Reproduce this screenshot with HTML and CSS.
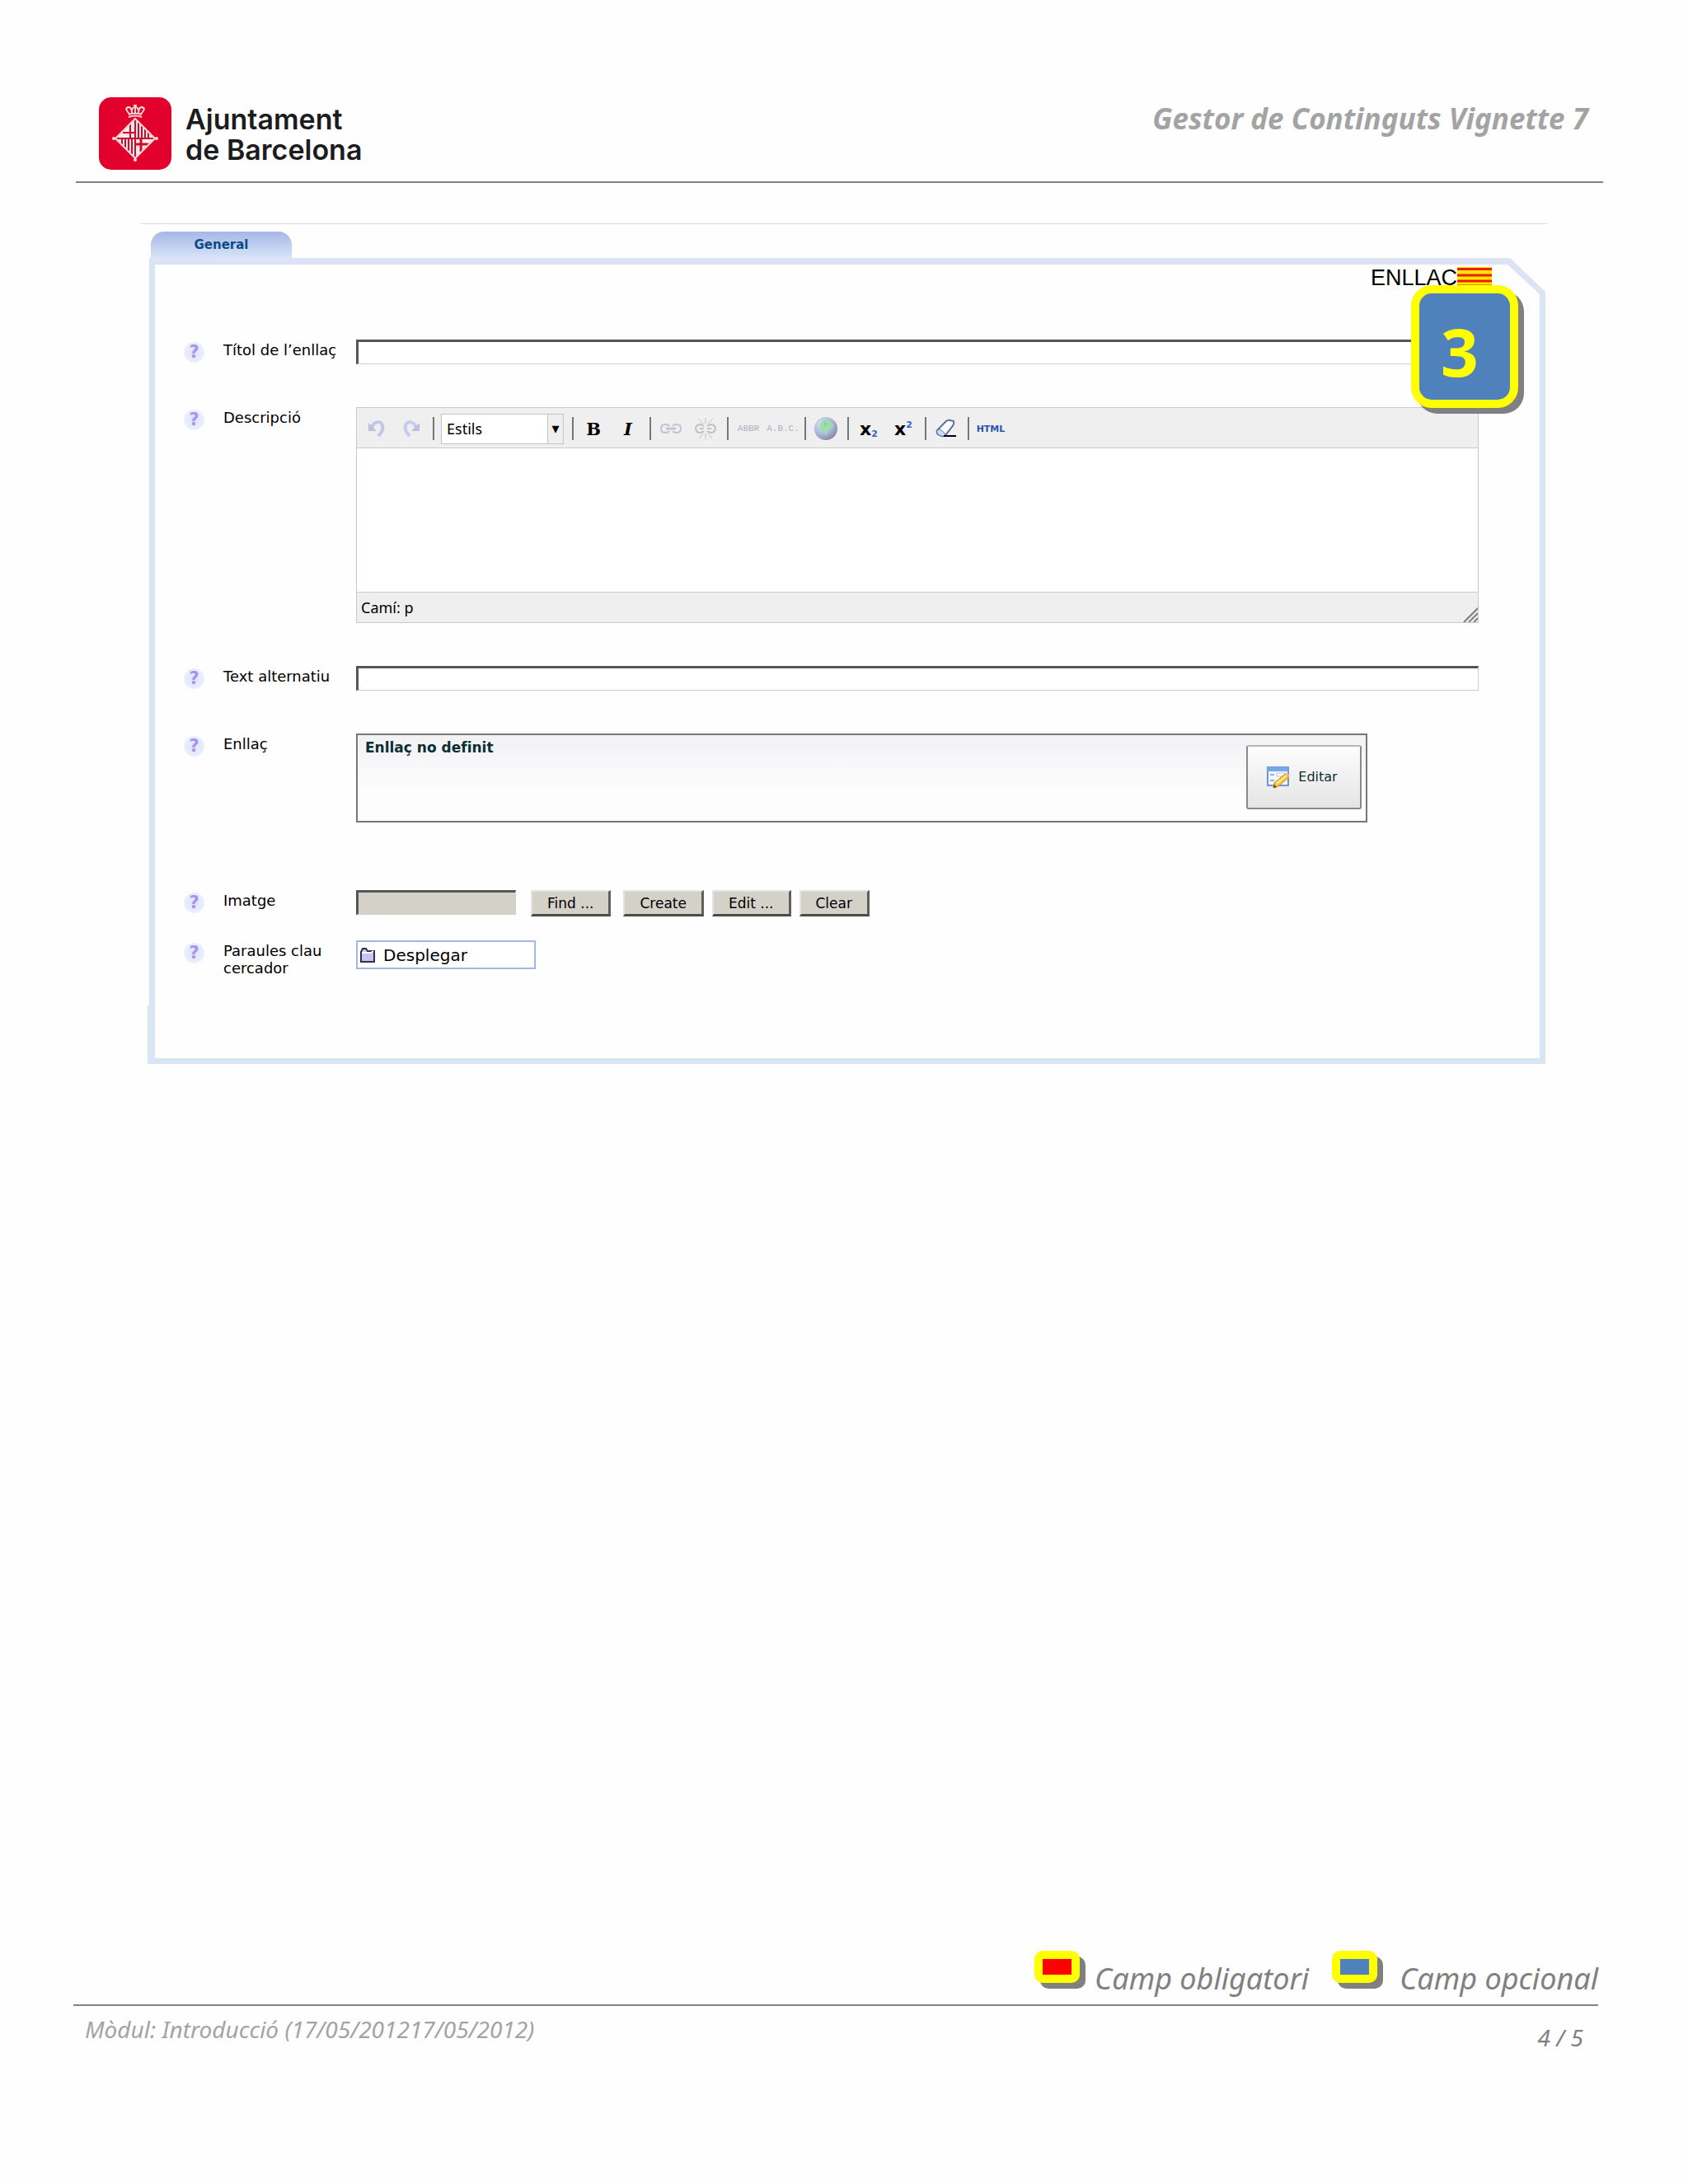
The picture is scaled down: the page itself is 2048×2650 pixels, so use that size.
FILE: index.html
```html
<!DOCTYPE html>
<html lang="ca">
  <head>
    <meta charset="utf-8" />
    <title>Gestor de Continguts Vignette 7</title>
    <link rel="stylesheet" href="styles.css">
  </head>

  <body>
    <header class="page-header">
      <div class="brand">
        <svg class="brand-logo" viewBox="0 0 88 88" aria-hidden="true">
          <rect width="88" height="88" rx="15" fill="#e2002d"></rect>
          <!-- crown -->
          <g fill="none" stroke="#fbd9d6" stroke-width="2">
            <path d="M37 20 Q30 13 36 12 Q40 12 40 20 M51 20 Q58 13 52 12 Q48 12 48 20 M40 20 Q39 12 44 12 Q49 12 48 20"></path>
            <path d="M36 24 Q44 21 52 24 M36 21 Q44 18 52 21 M44 9 V20 M42 10 H46"></path>
          </g>
          <!-- shield -->
          <path d="M44 27 L67 50 L44 73 L21 50 Z" fill="#fdeae6"></path>
          <g stroke="#cf0a30" stroke-width="2" fill="none">
            <path d="M38 33 V50 M29 43 H44 M44 27 V73 M21 50 H67"></path>
            <path d="M48 31 V50 M52 35 V50 M56 39 V50 M60 43 V50"></path>
            <path d="M28 50 V57 M32 50 V61 M36 50 V65 M40 50 V69"></path>
            <path d="M51 50 V66 M44 57 H60" stroke-width="3"></path>
          </g>
          <path d="M44 26 L68 50 L44 74 L20 50 Z" fill="none" stroke="#fbd9d6" stroke-width="2"></path>
          <g fill="#fbd9d6">
            <circle cx="18" cy="50" r="2"></circle>
            <circle cx="70" cy="50" r="2"></circle>
            <circle cx="44" cy="76" r="2"></circle>
          </g>
        </svg>
        <div class="brand-name">Ajuntament<br>de Barcelona</div>
      </div>
      <h1 class="doc-title">Gestor de Continguts Vignette 7</h1>
    </header>

    <main class="content">
      <button class="tab" type="button">General</button>
      <section class="panel">
        <svg class="panel-corner" viewBox="0 0 46 44" aria-hidden="true">
          <rect width="46" height="44" fill="#fefefe"></rect>
          <path d="M0 0 H3 L46 41 V44 H38 V43 L0 8 Z" fill="#dde2f5"></path>
        </svg>
        <div class="number-badge">3</div>

        <div class="panel-title">
          <span>ENLLAC</span>
          <svg class="flag" viewBox="0 0 42 24" aria-label="Català">
            <rect width="42" height="24" fill="#ffe800"></rect>
            <path d="M0 2.5 H42 M0 10 H42 M0 17 H42 M0 23 H42" stroke="#ee1c00" stroke-width="3"></path>
          </svg>
        </div>

        <form class="form">
          <div class="row">
            <button class="help" type="button">?</button>
            <label class="label" for="titol">Títol de l’enllaç</label>
            <input class="text-input" id="titol" type="text">
          </div>

          <div class="row">
            <button class="help" type="button">?</button>
            <label class="label" for="descripcio">Descripció</label>
            <div class="editor">
              <div class="toolbar">
                <button class="tool" type="button" aria-label="Desfer">
                  <svg width="22" height="22" viewBox="0 0 22 22"><path d="M5 9 L8 5 Q13 1 17 5 Q21 12 13 20" fill="none" stroke="#c3c6e4" stroke-width="4"></path><path d="M1 4 V14 H11 Z" fill="#b9c2dd"></path></svg>
                </button>
                <button class="tool" type="button" aria-label="Refer">
                  <svg width="22" height="22" viewBox="0 0 22 22"><path d="M17 9 L14 5 Q9 1 5 5 Q1 12 9 20" fill="none" stroke="#c9c8ee" stroke-width="4"></path><path d="M21 4 V14 H11 Z" fill="#b9c2e2"></path></svg>
                </button>
                <span class="sep"></span>
                <div class="style-select">
                  <select aria-label="Estils"><option>Estils</option></select>
                </div>
                <span class="sep"></span>
                <button class="tool bold" type="button">B</button>
                <button class="tool bold italic" type="button">I</button>
                <span class="sep"></span>
                <button class="tool" type="button" aria-label="Inserir enllaç">
                  <svg width="26" height="14" viewBox="0 0 26 14"><g fill="none" stroke="#c0c5cf" stroke-width="2"><path d="M11 4 Q10 2 6 2 Q1 2 1 7 Q1 12 6 12 Q10 12 11 10 M15 4 Q16 2 20 2 Q25 2 25 7 Q25 12 20 12 Q16 12 15 10"></path><path d="M7 7 H19" stroke-width="3"></path></g></svg>
                </button>
                <button class="tool" type="button" aria-label="Treure enllaç">
                  <svg width="26" height="28" viewBox="0 0 26 28"><g fill="none" stroke="#bfc1c4" stroke-width="2"><path d="M11 11 Q9 9 6 9 Q1 10 1 14 Q2 19 6 19 Q9 19 11 17 M15 11 Q17 9 20 9 Q25 10 25 14 Q24 19 20 19 Q17 19 15 17 M6 14 H11 M15 14 H20"></path><path d="M13 1 V8 M4 2 L10 8 M22 2 L16 8 M13 20 V27 M5 26 L10 20 M21 26 L16 20" stroke-width="1"></path></g></svg>
                </button>
                <span class="sep"></span>
                <button class="tool tiny" type="button">ABBR</button>
                <button class="tool tiny" type="button">A.B.C.</button>
                <span class="sep"></span>
                <button class="tool" type="button" aria-label="Idioma">
                  <svg width="28" height="28" viewBox="0 0 28 28">
                    <defs><radialGradient id="globe" cx="35%" cy="30%" r="75%"><stop offset="0" stop-color="#d6e6f2"></stop><stop offset="0.6" stop-color="#a9b6dc"></stop><stop offset="1" stop-color="#85899f"></stop></radialGradient></defs>
                    <circle cx="14" cy="14" r="14" fill="url(#globe)"></circle>
                    <path d="M9 4 L17 2 L20 8 L24 11 L18 15 L14 22 L11 17 L6 13 L8 8 Z" fill="#9cdfa4"></path>
                    <path d="M12 6 L16 8 L12 11 Z" fill="#8bbde6"></path>
                  </svg>
                </button>
                <span class="sep"></span>
                <button class="tool script" type="button">x<sub>2</sub></button>
                <button class="tool script" type="button">x<sup>2</sup></button>
                <span class="sep"></span>
                <button class="tool" type="button" aria-label="Netejar">
                  <svg width="26" height="24" viewBox="0 0 26 24"><path d="M13 3 Q15 1 18 2 L22 3 Q23 7 20 10 L12 20 Q9 23 3 19 Q0 16 3 13 Z" fill="#fff" stroke="#5d6fa6" stroke-width="2"></path><path d="M3 13 Q9 13 12 20 Q9 23 3 19 Q0 16 3 13Z" fill="#cfdcf5" stroke="#5d6fa6"></path><path d="M10 21 H25" stroke="#000" stroke-width="2"></path></svg>
                </button>
                <span class="sep"></span>
                <button class="tool html" type="button">HTML</button>
              </div>
              <textarea class="editor-text" id="descripcio"></textarea>
              <div class="status">
                <span>Camí: p</span>
                <svg class="grip" viewBox="0 0 18 18" aria-hidden="true"><path d="M1 18 L18 1 M7 18 L18 7 M13 18 L18 13" stroke="#7d7d7d" stroke-width="2"></path></svg>
              </div>
            </div>
          </div>

          <div class="row">
            <button class="help" type="button">?</button>
            <label class="label" for="alternatiu">Text alternatiu</label>
            <input class="text-input" id="alternatiu" type="text">
          </div>

          <div class="row row-link">
            <button class="help" type="button">?</button>
            <span class="label">Enllaç</span>
            <div class="link-box">
              <strong>Enllaç no definit</strong>
              <button class="edit-button" type="button">
                <svg width="28" height="28" viewBox="0 0 28 28" aria-hidden="true">
                  <rect x="1" y="2" width="25" height="22" fill="#f4f9ff" stroke="#6e96d6" stroke-width="2"></rect>
                  <rect x="1" y="2" width="25" height="5" fill="#79a7e6"></rect>
                  <path d="M4 11 H9 M4 18 H9" stroke="#6e96d6" stroke-width="1.5"></path>
                  <rect x="12" y="9" width="11" height="4" fill="#fff" stroke="#b9c8dd"></rect>
                  <path d="M8 27 L9 21 L22 10 L27 14 L14 25 Z" fill="#f6c532" stroke="#c98a28"></path>
                  <path d="M12 22 L24 12" stroke="#fff0a0" stroke-width="2"></path>
                  <path d="M22 10 L24 9 L28 11 L27 14 Z" fill="#f0b79a"></path>
                  <path d="M8 27 L9 23 L12 26 Z" fill="#6b3a1c"></path>
                </svg>
                Editar
              </button>
            </div>
          </div>

          <div class="row row-image">
            <button class="help" type="button">?</button>
            <label class="label" for="imatge">Imatge</label>
            <div class="image-field">
              <input class="text-input readonly" id="imatge" type="text" readonly>
              <button class="win-button" type="button">Find ...</button>
              <button class="win-button" type="button">Create</button>
              <button class="win-button" type="button">Edit ...</button>
              <button class="win-button" type="button">Clear</button>
            </div>
          </div>

          <div class="row">
            <button class="help" type="button">?</button>
            <span class="label">Paraules clau cercador</span>
            <button class="expand" type="button">
              <svg width="18" height="18" viewBox="0 0 18 18" aria-hidden="true"><path d="M1 5 L3 1 H7 L9 4 H17 V17 H1 Z" fill="#c5c6f6" stroke="#30304c" stroke-width="2"></path><path d="M2 6 H13 L16 4" fill="none" stroke="#fff" stroke-width="2"></path></svg>
              Desplegar
            </button>
          </div>
        </form>
      </section>
    </main>

    <footer class="page-footer">
      <div class="legend">
        <span class="chip chip-required"></span>
        <span class="legend-required">Camp obligatori</span>
        <span class="chip chip-optional"></span>
        <span class="legend-optional">Camp opcional</span>
      </div>
      <div class="footer-line">
        <span>Mòdul: Introducció (17/05/201217/05/2012)</span>
        <span class="page-number">4 / 5</span>
      </div>
    </footer>
  </body>
</html>
```

FILE: styles.css
```css
* {
  box-sizing: border-box;
}

body {
  display: flex;
  flex-direction: column;
  min-height: 100vh;
  margin: 0;
  background-color: #fefefe;
  color: #000;
  font-family: "DejaVu Sans", Verdana, sans-serif;
  font-size: 18px;
}

button,
input,
select,
textarea {
  margin: 0;
  font: inherit;
  color: inherit;
}

button {
  padding: 0;
  border: none;
  background: none;
}

svg {
  display: block;
  flex: none;
}

/* Header */
.page-header {
  display: flex;
  justify-content: space-between;
  align-items: flex-start;
  margin: 0 103px 0 92px;
  padding: 118px 18px 14px 28px;
  border-bottom: 2px solid #85818a;
}

.brand {
  display: flex;
  gap: 17px;
}

.brand-logo {
  width: 88px;
  height: 88px;
}

.brand-name {
  padding-top: 8px;
  font-family: Inter, sans-serif;
  font-size: 34px;
  font-weight: 600;
  line-height: 37px;
  color: #1c1c1e;
}

.doc-title {
  margin: 0;
  font-family: "Noto Sans", sans-serif;
  font-size: 35px;
  font-style: italic;
  font-weight: 700;
  line-height: 51px;
  color: #a3a3a4;
}

/* Panel */
.content {
  margin: 49px 171px 0;
  padding: 9px 2px 0 10px;
  border-top: 1px solid #dcd6d8;
}

.tab {
  display: block;
  width: 171px;
  height: 32px;
  margin-left: 2px;
  border-radius: 16px 16px 0 0;
  background: linear-gradient(#a6b6e8, #d8e4f8);
  font-size: 15px;
  font-weight: 700;
  color: #0c4a86;
}

.panel {
  position: relative;
  padding: 3px 74px 99px 35px;
  border: 7px solid #d8e5f5;
  border-top: 8px solid #dde2f5;
}

/* the frame gets thicker near its foot */
.panel::before {
  content: "";
  position: absolute;
  left: -9px;
  bottom: -7px;
  width: 2px;
  height: 71px;
  background-color: #d8e5f5;
}

.panel-corner {
  position: absolute;
  top: -8px;
  right: -7px;
  width: 46px;
  height: 44px;
}

.number-badge {
  position: absolute;
  top: 25px;
  right: 26px;
  width: 130px;
  height: 149px;
  border: 10px solid #ffff00;
  border-radius: 25px;
  background-color: #4f81bd;
  box-shadow: 7px 7px 0 #808080;
  padding-right: 12px;
  font-family: "Noto Sans", sans-serif;
  font-size: 80px;
  font-weight: 700;
  line-height: 140px;
  text-align: center;
  color: #ffff00;
}

.panel-title {
  display: flex;
  justify-content: flex-end;
  margin-right: -16px;
  margin-bottom: 64px;
  font-family: "Liberation Sans", Arial, sans-serif;
  font-size: 27px;
  line-height: 26px;
  height: 24px;
}

.flag {
  width: 42px;
  height: 24px;
}

/* Form */
.form {
  display: flex;
  flex-direction: column;
  gap: 52px;
}

.row {
  display: grid;
  grid-template-columns: 47px 162px 1fr;
  align-items: start;
}

.row-link {
  margin-bottom: 30px;
}

.row-image {
  margin-bottom: -23px;
}

.help {
  width: 25px;
  height: 25px;
  margin-top: 3px;
  border-radius: 50%;
  background: radial-gradient(#dfe4fd, #eef5fe);
  font-size: 21px;
  font-weight: 700;
  line-height: 25px;
  color: #a794f0;
}

.label {
  padding: 2px 22px 0 1px;
  line-height: 21px;
}

.text-input {
  width: 100%;
  height: 30px;
  border: 1px solid #ccc;
  border-top: 3px solid #55555a;
  border-left: 3px solid #55555a;
  background-color: #fff;
}

.readonly {
  width: 194px;
  border-right-color: #d4d0c8;
  border-bottom-color: #d4d0c8;
  background-color: #d4d1c9;
}

/* Rich text editor */
.editor {
  border: 1px solid #c8c9cc;
  font-family: "Noto Sans", Tahoma, sans-serif;
}

.toolbar {
  display: flex;
  align-items: center;
  height: 49px;
  padding: 2px 0 0 3px;
  border-bottom: 1px solid #c8c9cc;
  background-color: #efefef;
}

.tool {
  display: flex;
  justify-content: center;
  align-items: center;
  width: 42px;
  height: 36px;
}

.sep {
  width: 2px;
  height: 28px;
  margin: 0 3px 0 5px;
  background-color: #77777a;
}

.style-select {
  position: relative;
  width: 149px;
  height: 37px;
  margin: 0 5px;
}

.style-select select {
  width: 100%;
  height: 100%;
  padding: 0 6px;
  border: 1px solid #c4c4c8;
  border-radius: 0;
  background-color: #fff;
  appearance: none;
}

.style-select::after {
  content: "▾";
  position: absolute;
  top: 1px;
  right: 1px;
  width: 18px;
  height: 35px;
  border-left: 1px solid #c4c4c8;
  background-color: #efefef;
  font-family: "DejaVu Sans", sans-serif;
  line-height: 34px;
  text-align: center;
  pointer-events: none;
}

.bold {
  font-family: "DejaVu Serif", serif;
  font-size: 21px;
  font-weight: 700;
}

.italic {
  font-style: italic;
}

.tiny {
  font-family: "Liberation Mono", monospace;
  font-size: 11px;
  color: #a9b3c0;
}

.script {
  font-family: "DejaVu Sans", sans-serif;
  font-size: 22px;
  font-weight: 700;
}

.script sub,
.script sup {
  font-size: 11px;
  color: #3a5fc0;
}

.script sub {
  padding-top: 12px;
}

.script sup {
  padding-bottom: 10px;
}

.html {
  width: 46px;
  font-family: "DejaVu Sans", sans-serif;
  font-size: 11px;
  font-weight: 700;
  color: #2a55b0;
}

.editor-text {
  display: block;
  width: 100%;
  height: 174px;
  border: none;
  background-color: #fff;
  resize: none;
}

.status {
  display: flex;
  justify-content: space-between;
  align-items: flex-end;
  height: 37px;
  padding-left: 5px;
  border-top: 1px solid #c8c9cc;
  background-color: #efefef;
  line-height: 36px;
}

.grip {
  width: 18px;
  height: 18px;
}

/* Link box */
.link-box {
  display: flex;
  justify-content: space-between;
  height: 108px;
  margin-right: 135px;
  padding: 12px 5px 0 9px;
  border: 2px solid #77777b;
  background: linear-gradient(#f2f2f4, #fdfdfe 70%);
  font-size: 17px;
  line-height: 6px;
  color: #0b2f33;
}

.edit-button {
  display: flex;
  justify-content: center;
  align-items: center;
  gap: 10px;
  width: 140px;
  height: 78px;
  padding-right: 4px;
  border: 2px solid #8a8a8c;
  border-top-color: #b5b5b7;
  border-radius: 3px;
  background: linear-gradient(#fdfdfe, #e4e4e5);
  font-size: 16px;
}

/* Image field */
.image-field {
  display: flex;
  gap: 10px;
}

.win-button {
  height: 32px;
  padding: 0 18px;
  border: 2px solid #e6e4de;
  border-right: 3px solid #5f5e5a;
  border-bottom: 3px solid #4c4b48;
  background-color: #d4d1c9;
  font-size: 17px;
}

.image-field .win-button:nth-child(2) {
  margin: 0 5px 0 8px;
}

.expand {
  display: flex;
  align-items: center;
  gap: 10px;
  width: 218px;
  height: 35px;
  padding-left: 3px;
  border: 2px solid #a3b7e0;
  background-color: #fff;
  font-size: 20px;
}

/* Footer */
.page-footer {
  margin: auto 109px 0 89px;
  padding-bottom: 158px;
  font-family: "Noto Sans", sans-serif;
  font-style: italic;
}

.legend {
  display: flex;
  justify-content: flex-end;
  align-items: flex-start;
  padding-bottom: 3px;
  border-bottom: 2px solid #85818a;
  font-size: 36px;
  line-height: 57px;
  color: #808080;
}

.chip {
  width: 55px;
  height: 39px;
  margin-top: 1px;
  border: 10px solid #ffff00;
  border-radius: 10px;
  box-shadow: 7px 7px 0 #808080;
}

.chip-required {
  background-color: #ff0000;
}

.chip-optional {
  background-color: #4f81bd;
}

.legend-required {
  margin: 0 28px 0 18px;
  padding-top: 6px;
}

.legend-optional {
  margin-left: 27px;
  padding-top: 6px;
}

.footer-line {
  display: flex;
  justify-content: space-between;
  padding: 8px 18px 0 14px;
  font-size: 28px;
  line-height: 40px;
  color: #a3a3a4;
}

.page-number {
  padding-top: 10px;
  color: #808080;
}
```
